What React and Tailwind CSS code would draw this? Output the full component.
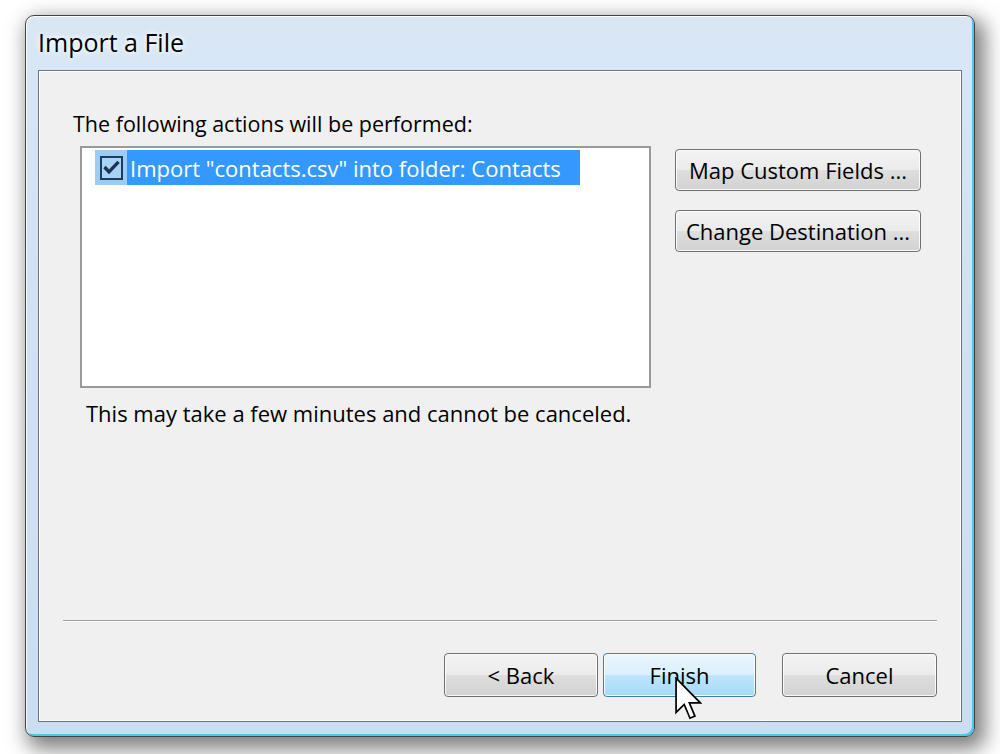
import React from "react";

const FONT = { fontFamily: '"Open Sans", "Noto Sans", "Liberation Sans", sans-serif' };

function VistaButton({ children, className = "", hot = false }) {
  const skin = hot
    ? "border-[#3c7fb1] bg-[linear-gradient(to_bottom,#eaf6fd_0%,#d9f0fc_50%,#bee6fd_51%,#a7d9f5_100%)]"
    : "border-[#707070] bg-[linear-gradient(to_bottom,#f3f3f3_0%,#ebebeb_50%,#dedede_51%,#d2d2d2_100%)]";
  return (
    <div
      className={`flex items-center justify-center rounded-[4px] border text-[22px] leading-none text-black shadow-[inset_0_0_0_1px_rgba(255,255,255,0.85)] ${skin} ${className}`}
    >
      {children}
    </div>
  );
}

function CheckBox() {
  return (
    <div className="flex h-[35px] w-[32px] items-center justify-center bg-[#9ccbf6]">
      <div className="flex h-[24px] w-[23px] items-center justify-center border-2 border-[#1f3b5c] bg-[#a7d3f7]">
        <svg width="17" height="15" viewBox="0 0 17 15">
          <path d="M1.5 7 L6 11.8 L15.5 1.8" fill="none" stroke="#1c3352" strokeWidth="3.4" strokeLinejoin="miter" />
        </svg>
      </div>
    </div>
  );
}

function Pointer() {
  return (
    <svg
      className="pointer-events-none absolute left-[675px] top-[677px]"
      width="27"
      height="43"
      viewBox="0 0 12.6 20"
    >
      <path
        d="M0.5 0.5 L0.5 16.5 L4.3 12.8 L7 19.2 L9.3 18.2 L6.7 12 L11.8 12 Z"
        fill="#ffffff"
        stroke="#000000"
        strokeWidth="0.8"
        strokeLinejoin="miter"
      />
    </svg>
  );
}

export default function App() {
  return (
    <div className="relative h-[754px] w-[1000px] overflow-hidden bg-white" style={FONT}>
      <div className="ml-[25px] mt-[15px] flex h-[722px] w-[950px] flex-col rounded-[9px] border border-[#3f4246] bg-[linear-gradient(to_bottom,#d9e7f5_0%,#d0e1f2_40%,#cbdef1_100%)] px-[12px] pb-[14px] shadow-[6px_8px_20px_4px_rgba(0,0,0,0.5),inset_1px_1px_0_rgba(255,255,255,0.9),inset_-2px_-2px_0_#4cc8ef]">
        {/* caption */}
        <div className="flex h-[54px] items-center pb-[2px]">
          <span className="text-[25px] leading-none text-black [text-shadow:0_0_8px_#ffffff,0_0_4px_#ffffff]">
            Import a File
          </span>
        </div>

        {/* client area */}
        <div className="flex flex-1 flex-col border border-[#6b7581] bg-[#f0f0f0] shadow-[inset_0_0_0_1px_#ffffff]">
          <div className="pl-[34px] pt-[39px] text-[21.5px] leading-[28px] text-black">
            The following actions will be performed:
          </div>

          <div className="ml-[41px] mt-[8px] flex items-start gap-[24px]">
            <div className="h-[242px] w-[571px] border-2 border-[#9a9a9a] bg-white pl-[13px] pt-[2px]">
              <div className="flex items-center">
                <CheckBox />
                <div className="flex h-[35px] items-center bg-[#3399ff] pl-[3px] pr-[19px] text-[22px] leading-none text-white">
                  Import "contacts.csv" into folder: Contacts
                </div>
              </div>
            </div>

            <div className="mt-[3px] flex flex-col gap-[19px]">
              <VistaButton className="h-[42px] w-[246px]">Map Custom Fields ...</VistaButton>
              <VistaButton className="h-[42px] w-[246px]">Change Destination ...</VistaButton>
            </div>
          </div>

          <div className="ml-[47px] mt-[11px] text-[22px] leading-[28px] text-black">
            This may take a few minutes and cannot be canceled.
          </div>

          <div className="mx-[24px] mt-auto h-[2px] border-t border-b border-t-[#a0a0a0] border-b-white" />

          <div className="flex justify-end pb-[24px] pr-[24px] pt-[31px]">
            <VistaButton className="h-[44px] w-[154px]">&lt; Back</VistaButton>
            <VistaButton hot className="ml-[5px] h-[44px] w-[153px]">Finish</VistaButton>
            <VistaButton className="ml-[26px] h-[44px] w-[155px]">Cancel</VistaButton>
          </div>
        </div>
      </div>

      <Pointer />
    </div>
  );
}
